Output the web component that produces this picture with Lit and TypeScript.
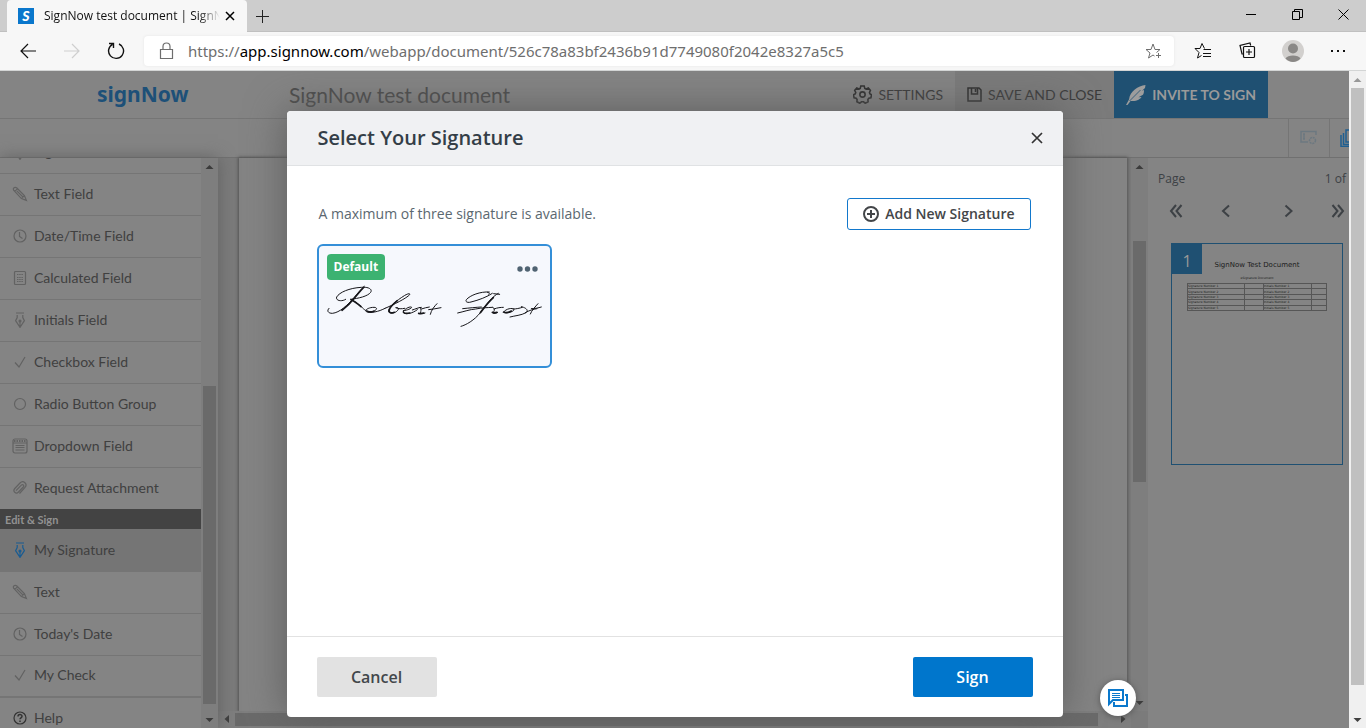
import { LitElement, html, css, svg, TemplateResult } from "lit";
import { customElement, property, state } from "lit/decorators.js";
import { classMap } from "lit/directives/class-map.js";

const icon = (body: TemplateResult, size = 16, box = 16) => html`<svg
  width=${size} height=${size} viewBox="0 0 ${box} ${box}" fill="none" stroke="currentColor"
  stroke-width="1.2" aria-hidden="true">${body}</svg>`;

const pen = svg`<path d="M4 1h8M5.2 3v2.6L3.6 8.6 8 15.4l4.4-6.8-1.6-3V3M8 9v5"/><circle cx="8" cy="9" r="1" fill="currentColor"/>`;
const pencil = svg`<path d="M1.6 4.2Q.8 2.8 2 1.8t2.6 0L12.4 9.6l2 4.8-5-1.8L1.6 4.2M2.8 5.4l2.800-2.800M12.4 9.6l-3 3M4.800 4.800l6.200 6.200M13 13l1.200 1.200"/>`;
const clock = svg`<circle cx="8" cy="8" r="6"/><path d="M7.5 4v4.5l3 2"/>`;
const calc = svg`<rect x="2.5" y="1.5" width="11" height="13" rx="1"/><path d="M5 4.500h6M5 7.500h6M5 9.500h6M5 11.500h6" stroke-dasharray="1.500 .7"/>`;
const check = svg`<path d="M3 8.500l4 4.500 6-10"/>`;
const circle = svg`<circle cx="8" cy="8" r="5.500"/>`;
const list = svg`<rect x="1" y="1" width="14" height="14" rx="2"/><path d="M1 5h14M3.500 7.500h9M3.500 9.500h9M3.500 12h9"/><path d="M2 3h12" stroke-dasharray="1.500 1" stroke-width="2"/>`;
const clip = svg`<path d="M4 10.600l5.300-5.500c1.500-1.300 3.300.4 2 1.900L6.500 12c-2.500 2.600-6.200-.6-3.700-3.500L8 3c3.300-3.400 8.200 1 4.800 4.700L7.500 13.500"/>`;
const help = svg`<circle cx="8" cy="8" r="6"/><path d="M6 6.500C6 4 10 4 10 6.300 10 8 8 7.700 8 9.300M8 10.500V12" stroke-width="1.500"/>`;

interface Item { label: string; glyph: TemplateResult; }

const FIELDS: Item[] = [
  { label: "Signature Field", glyph: pen },
  { label: "Text Field", glyph: pencil },
  { label: "Date/Time Field", glyph: clock },
  { label: "Calculated Field", glyph: calc },
  { label: "Initials Field", glyph: pen },
  { label: "Checkbox Field", glyph: check },
  { label: "Radio Button Group", glyph: circle },
  { label: "Dropdown Field", glyph: list },
  { label: "Request Attachment", glyph: clip },
];
const TOOLS: Item[] = [
  { label: "My Signature", glyph: pen },
  { label: "Text", glyph: pencil },
  { label: "Today's Date", glyph: clock },
  { label: "My Check", glyph: check },
];

@customElement("scroll-rail")
class ScrollRail extends LitElement {
  @property({ type: Number }) before = 0;
  @property({ type: Number }) size = 1;
  @property({ type: Number }) after = 0;
  @property({ type: Boolean, reflect: true }) horizontal = false;

  static styles = css`
    :host { display: flex; flex-direction: column; width: 17px; flex: none; background: var(--track, #7e7e7e); color: var(--arrow, #3b3b3b); }
    :host([horizontal]) { flex-direction: row; width: auto; height: 17px; }
    .end { width: 17px; height: 17px; flex: none; }
    .track { flex: 1; min-height: 0; min-width: 0; display: flex; flex-direction: column; padding: 0 2px; }
    :host([horizontal]) .track { flex-direction: row; padding: 2px 0; }
    .thumb { background: var(--thumb, #6a6a6a); }
    svg { display: block; }
    .first { color: var(--first, inherit); }
  `;

  render() {
    const h = this.horizontal;
    return html`
      <div class="end first"><svg width="17" height="17"><path fill="currentColor" d=${h ? "M11 4v8L6.500 8z" : "M4.500 11h8L8.500 7z"} /></svg></div>
      <div class="track">
        <div style="flex:${this.before} 0 0"></div>
        <div class="thumb" style="flex:${this.size} 0 0"></div>
        <div style="flex:${this.after} 0 0"></div>
      </div>
      <div class="end"><svg width="17" height="17"><path fill="currentColor" d=${h ? "M7 4v8l4.500-4z" : "M4.500 7h8l-4 4z"} /></svg></div>
    `;
  }
}

@customElement("browser-chrome")
class BrowserChrome extends LitElement {
  static styles = css`
    :host { display: block; font-family: "Noto Sans", "Open Sans", sans-serif; color: #111; }
    button { border: 0; background: none; padding: 0; color: inherit; font: inherit; display: grid; place-items: center; }
    .tabs { height: 32px; box-sizing: border-box; background: #cdcdcd; border-bottom: 1px solid #c0c0c0; display: flex; padding-left: 7px; }
    .tab { width: 240px; height: 32px; box-sizing: border-box; background: #f7f7f7; border-radius: 4px 4px 0 0; display: flex; align-items: center; padding: 0 11px; font: 12px/16px "Open Sans", sans-serif; }
    .fav { width: 16px; height: 16px; background: #0a77cc; color: #fff; display: grid; place-items: center; font: italic 900 14px/16px Lato, sans-serif; margin-right: 10px; }
    .name { flex: 1; white-space: nowrap; overflow: hidden; mask-image: linear-gradient(to right, #000 88%, transparent); }
    .close { margin-left: 4px; }
    .new { width: 30px; height: 32px; }
    .win { margin-left: auto; display: flex; }
    .win button { width: 46px; height: 28px; }
    .bar { height: 39px; box-sizing: border-box; background: #f7f7f7; border-bottom: 1px solid #d3d5d5; display: flex; align-items: center; padding: 0 6px; }
    .nav { width: 44px; height: 32px; }
    .field ~ .nav { width: 45px; }
    .faded { color: #cfcfcf; }
    .field { flex: 1; margin: 0 6px; height: 30px; background: #fff; border-radius: 4px; box-shadow: 0 0 3px #e4e4e4; display: flex; align-items: center; padding: 0 11px 0 13px; color: #6e6e6e; }
    .url { flex: 1; margin-left: 13px; font-size: 15px; white-space: nowrap; overflow: hidden; }
    .url b { font-weight: 400; color: #000; }
    svg { display: block; }
  `;

  render() {
    return html`
      <div class="tabs">
        <div class="tab">
          <span class="fav">S</span>
          <span class="name">SignNow test document | SignNow</span>
          <button class="close" aria-label="Close tab"><svg width="12" height="12" stroke="#000" stroke-width="1.500"><path d="M2 2l8 8M10 2l-8 8" /></svg></button>
        </div>
        <button class="new" aria-label="New tab"><svg width="14" height="14" stroke="#222"><path d="M7.500 1v13M1 7.500h13" /></svg></button>
        <div class="win">
          <button aria-label="Minimize"><svg width="10" height="10" stroke="#000"><path d="M0 5.500h10" /></svg></button>
          <button aria-label="Restore"><svg width="11" height="11" stroke="#000" fill="none"><path d="M.5 2.500h7v8h-7zM2.500 2.500v-2h8v8h-3" /></svg></button>
          <button aria-label="Close window"><svg width="11" height="11" stroke="#000"><path d="M.5.500l10 10M10.500.500l-10 10" /></svg></button>
        </div>
      </div>
      <div class="bar">
        <button class="nav" aria-label="Back"><svg width="18" height="16" stroke="#111" fill="none" stroke-width="1.200"><path d="M17 8H2M9 1L2 8l7 7" /></svg></button>
        <button class="nav faded" aria-label="Forward"><svg width="18" height="16" stroke="currentColor" fill="none" stroke-width="1.200"><path d="M1 8h15M9 1l7 7-7 7" /></svg></button>
        <button class="nav" aria-label="Reload"><svg width="18" height="18" stroke="#111" fill="none" stroke-width="1.400"><path d="M12 2a7.500 7.500 0 1 1-6.500.3M2 1.500h4.500V6" /></svg></button>
        <div class="field">
          <svg width="18" height="18" stroke="currentColor" fill="none" stroke-width="1.200"><path d="M3.500 7.500h12v9h-12zM6 7.500V4.500a3.500 3.500 0 0 1 7 0v3" /></svg>
          <span class="url">https://<b>app.signnow.com</b>/webapp/document/526c78a83bf2436b91d7749080f2042e8327a5c5</span>
          <svg width="18" height="18" stroke="currentColor" fill="none"><path d="M11.500 10.500l3.500-3h-5L8 2 6 7.500H1l4 3.500-1.500 5L8 13l1.500 1M13.500 11v5M11 13.500h5" /></svg>
        </div>
        <button class="nav" aria-label="Favorites"><svg width="18" height="18" stroke="#111" fill="none"><path d="M10.500 6.500L8 1.500 6 6.500H1l4 4-1.500 5.500 4-2.500M9.500 7.500H17M9 11.500h8M9 14.500h8" /></svg></button>
        <button class="nav" aria-label="Collections"><svg width="18" height="18" stroke="#111" fill="none" stroke-width="1.200"><path d="M4 12L3 12 1 3.500l10-2.500.7 2.500" /><rect x="4.500" y="4.500" width="11" height="11" rx="1" /><path d="M10 7v6M7 10h6" /></svg></button>
        <button class="nav" aria-label="Profile"><svg width="22" height="22"><circle cx="11" cy="11" r="11" fill="#d2d0ce" /><circle cx="11" cy="8.500" r="5" fill="#8a8886" /><path d="M3.500 18.500c2-4 13-4 15 0-4 4.500-11 4.500-15 0z" fill="#8a8886" /></svg></button>
        <button class="nav" aria-label="More"><svg width="16" height="4" fill="#111"><path d="M1 1h2v2H1zM7 1h2v2H7zM13 1h2v2h-2z" /></svg></button>
      </div>
    `;
  }
}

@customElement("tool-sidebar")
class ToolSidebar extends LitElement {
  @state() private active = "My Signature";

  static styles = css`
    :host { display: flex; width: 218px; flex: none; overflow: hidden; font: 14px/20px Lato, sans-serif; color: #404040; box-shadow: 0 0 16px #606060; z-index: 1; background: #848484; }
    .list { flex: 1; overflow: hidden; min-height: 0; }
    ul { list-style: none; margin: 0; padding: 0; }
    .fields { margin-top: -26px; }
    button { width: 100%; height: 42px; box-sizing: border-box; display: flex; align-items: center; gap: 6px; border: 0; border-bottom: 1px solid #757575; background: none; padding: 0 12px 2px; font: inherit; color: inherit; }
    svg { color: #626262; flex: none; }
    .fields li:last-child button { border-bottom: 0; height: 41px; }
    .tools { border-top: 1px solid #757575; }
    .tools li:last-child button { border-bottom-width: 2px; }
    h2 { margin: 0; height: 20px; padding: 0 5px; background: #434343; color: #929292; font: 700 11px/22px Lato, sans-serif; }
    .active { background: #757575; }
    .active svg { color: #1a5c92; }
    .help svg { color: #333; }
  `;

  private row(item: Item) {
    return html`<li><button class=${classMap({ active: item.label === this.active })}
      @click=${() => (this.active = item.label)}>${icon(item.glyph)}${item.label}</button></li>`;
  }

  render() {
    return html`
      <nav class="list" aria-label="Tools">
        <ul class="fields">${FIELDS.map((f) => this.row(f))}</ul>
        <h2>Edit &amp; Sign</h2>
        <ul class="tools">${TOOLS.map((f) => this.row(f))}</ul>
        <button class="help">${icon(help)}Help</button>
      </nav>
      <scroll-rail .before=${211} .size=${318} .after=${7}></scroll-rail>
    `;
  }
}

@customElement("page-panel")
class PagePanel extends LitElement {
  static styles = css`
    :host { display: block; width: 201px; flex: none; box-sizing: border-box; overflow: hidden; background: #848484; color: #3d4145; font: 12px/20px "Open Sans", sans-serif; }
    .top { display: flex; justify-content: space-between; white-space: nowrap; padding: 11px 3px 0 10px; }
    .steps { display: flex; justify-content: space-between; padding: 13px 4px 0 21px; }
    .steps button { border: 0; background: none; padding: 0; height: 18px; color: inherit; }
    .steps button:nth-child(2) { margin-right: 12px; }
    svg { display: block; }
    .thumb { margin: 23px 6px 0 23px; height: 222px; box-sizing: border-box; border: 1px solid #1f5072; position: relative; padding: 15px 15px 0 15px; font-family: "DejaVu Sans", sans-serif; color: #1c1c1c; }
    .num { position: absolute; left: 0; top: 0; width: 30px; height: 30px; background: #1f5072; color: #999; font: 16px/34px "Open Sans", sans-serif; text-align: center; }
    h3 { margin: 0; font-size: 7px; line-height: 12px; text-align: center; font-weight: 400; white-space: nowrap; }
    p { margin: 4px 0 0; font-size: 3px; line-height: 6px; text-align: center; }
    table { margin-top: 2px; width: 100%; height: 28px; border-collapse: collapse; table-layout: fixed; font-size: 3px; line-height: 4px; }
    td { border: 1px solid #565656; padding: 0; overflow: hidden; white-space: nowrap; }
    .wide { width: 40%; } .slim { width: 13%; } .mid { width: 34%; }
  `;

  private step(label: string, d: string) {
    return html`<button aria-label=${label}><svg width="14" height="18" fill="none" stroke="currentColor" stroke-width="2"><path d=${d} /></svg></button>`;
  }

  render() {
    return html`
      <div class="top"><span>Page</span><span>1 of</span></div>
      <div class="steps">
        ${this.step("First page", "M7 3L2 9l5 6M12.500 3l-5 6 5 6")}
        ${this.step("Previous page", "M10 3.500L4 9l6 5.500")}
        ${this.step("Next page", "M4.500 3.500L10.500 9l-6 5.500")}
        ${this.step("Last page", "M7 3l5 6-5 6M1.500 3l5 6-5 6")}
      </div>
      <div class="thumb">
        <span class="num">1</span>
        <h3>SignNow Test Document</h3>
        <p>eSignature Document</p>
        <table><tbody>
          ${[1, 2, 3, 4, 5].map((n) => html`<tr><td class="wide">Signature Number ${n}</td><td class="slim"></td><td class="mid">Initials Number ${n}</td><td></td></tr>`)}
        </tbody></table>
      </div>
    `;
  }
}

@customElement("signature-dialog")
class SignatureDialog extends LitElement {
  static styles = css`
    :host { display: flex; flex-direction: column; width: 776px; max-width: 94%; background: #fff; border-radius: 4px; overflow: hidden; box-shadow: 0 0 40px #5c5c5c; font-family: "Open Sans", sans-serif; }
    header { height: 54px; flex: none; display: flex; align-items: center; justify-content: space-between; padding: 0 18px 0 31px; background: #f0f1f3; border-bottom: 1px solid #e0e2e4; }
    h1 { margin: 0; font-size: 20px; line-height: 28px; font-weight: 600; color: #343e47; }
    button { font: 600 16px/20px "Open Sans", sans-serif; }
    svg { display: block; }
    .x { border: 0; background: none; padding: 0; color: #333; }
    main { flex: 1; min-height: 0; padding: 32px 32px 0 30px; }
    .row { display: flex; align-items: center; justify-content: space-between; }
    p { margin: 0 0 0 2px; font-size: 14px; line-height: 20px; color: #5b6870; }
    .add { height: 32px; padding: 0 15px; display: flex; align-items: center; gap: 6px; border: 1px solid #1278cc; border-radius: 3px; background: #fff; color: #434649; font-size: 14px; }
    .card { margin-top: 14px; width: 235px; height: 124px; box-sizing: border-box; border: 2px solid #348fd8; border-radius: 6px; background: #f6f8fd; padding: 8px; }
    .card .row { height: 26px; }
    .badge { background: #3cb271; color: #fff; border-radius: 4px; height: 26px; padding: 0 7px; font-size: 12px; line-height: 26px; font-weight: 700; }
    .dots { border: 0; background: none; padding: 4px 4px 0 0; color: #506372; }
    .sig { margin-top: 5px; }
    footer { flex: none; border-top: 1px solid #e2e2e2; padding: 20px 30px; display: flex; justify-content: space-between; }
    footer button { width: 120px; height: 40px; border: 0; border-radius: 2px; background: #e2e2e2; color: #42474b; }
    footer .sign { background: #0076cc; color: #fff; }
  `;

  render() {
    return html`
      <header>
        <h1>Select Your Signature</h1>
        <button class="x" aria-label="Close"><svg width="16" height="16" stroke="currentColor" stroke-width="1.700"><path d="M3 3l10 10M13 3L3 13" /></svg></button>
      </header>
      <main>
        <div class="row">
          <p>A maximum of three signature is available.</p>
          <button class="add">
            <svg width="16" height="16" fill="none" stroke="currentColor" stroke-width="2"><circle cx="8" cy="8" r="7" /><path d="M8 4v8M4 8h8" /></svg>
            Add New Signature
          </button>
        </div>
        <div class="card">
          <div class="row">
            <span class="badge">Default</span>
            <button class="dots" aria-label="More options"><svg width="21" height="6" fill="currentColor"><circle cx="3" cy="3" r="2.700" /><circle cx="10.500" cy="3" r="2.700" /><circle cx="18" cy="3" r="2.700" /></svg></button>
          </div>
          <svg class="sig" width="215" height="44" viewBox="141 645 645 132" role="img" aria-label="Signature of Robert Frost" fill="none" stroke="#16161a" stroke-linecap="round" stroke-linejoin="round" stroke-width="3">
            <path d="M147 715c-8 8-2 15 10 15 22-2 46-25 65-47 12-14 22-26 31-34" />
            <path d="M186 721c14-11 27-24 38-38 9-11 18-22 27-31" stroke-width="5" />
            <path d="M197 688c-12 8-31 4-27-7 8-14 38-27 74-29 22-2 34 6 28 15-9 12-36 18-60 21" />
            <path d="M212 688c12 5 22 14 32 22 8 9 18 17 30 15 18-3 20-13 8-13-16 0-29 8-23 13 10 6 38 0 56-10" />
            <path d="M214 690c12 5 20 12 29 20M262 724c8 3 14 2 20 0" stroke-width="5" />
            <path d="M315 715c24-10 66-31 74-41 3-5-7-3-16 3-24 15-48 35-47 46 0 9 14 8 23 2 9-7 9-14-2-12 8 4 18 4 27 2" />
            <path d="M352 692c-15 12-24 22-25 31 1 6 8 7 16 4" stroke-width="5" />
            <path d="M370 722c12-1 25-7 25-10-3-4-19 3-24 11-3 8 7 9 18 7 9-2 16-6 23-11" />
            <path d="M370 726c2 5 10 5 19 3M416 730c5 1 10 1 15-1" stroke-width="5" />
            <path d="M397 720c10-3 19-8 27-8M418 712c7 4 5 11 3 17 4 2 9 2 14 0M424 717c9-3 17-5 24-6" />
            <path d="M471 701c-8 8-17 19-20 32M446 719c12-1 25-4 37-6" />
            <path d="M628 666c-27-2-58 10-69 23-4 7 4 10 14 7 24-6 48-15 64-26M622 667c6 0 8 3 4 6" />
            <path d="M655 670c-18 9-38 35-54 58-18 23-43 37-58 41M641 671l18 2" />
            <path d="M640 683c-14 12-28 31-39 45" stroke-width="5" />
            <path d="M533 729c18-4 38-11 54-12 20-4 35-4 50-5M548 716c18-2 40-4 56-5" />
            <path d="M638 712c8 3 6 11 0 17 6 2 10 1 14-1M642 717c10-4 20-5 28-5" />
            <path d="M670 727c8-12 28-14 32-9 2 6-19 13-29 10M699 717c10 0 19-2 28-5" />
            <path d="M637 727c5 3 9 2 14 0M671 726c6 3 16 1 23-3" stroke-width="5" />
            <path d="M724 710c14 3 23 11 14 18-14 8-33 9-48 13M736 728c12-7 23-10 35-12" />
            <path d="M774 701c-8 9-19 20-23 31M754 716c11 0 20-2 30-5" />
          </svg>
        </div>
      </main>
      <footer><button>Cancel</button><button class="sign">Sign</button></footer>
    `;
  }
}

@customElement("app-root")
class AppRoot extends LitElement {
  static styles = css`
    :host { display: flex; flex-direction: column; height: 100vh; overflow: hidden; font-family: Lato, sans-serif; }
    .view { flex: 1; min-height: 0; display: flex; }
    .outer { --track: #f0f0f0; --thumb: #c0c0c0; --arrow: #404040; --first: #989898; }
    .site { flex: 1; min-width: 0; position: relative; display: flex; flex-direction: column; background: #848484; overflow: hidden; }
    button { border: 0; background: none; padding: 0; font: 14px/20px Lato, sans-serif; color: #3a3a3a; }
    svg { display: block; flex: none; }
    .head { height: 47px; flex: none; display: flex; align-items: stretch; border-bottom: 1px solid #757575; }
    .logo { width: 287px; box-sizing: border-box; padding-left: 97px; font: 700 21px/46px "Noto Sans", sans-serif; color: #1d5078; }
    .title { flex: 1; padding-left: 2px; font-size: 21px; line-height: 48px; color: #4c4c4c; white-space: nowrap; overflow: hidden; }
    .head button { display: flex; align-items: center; gap: 6px; padding: 0 12px; white-space: nowrap; }
    .head .save { background: #7b7b7b; }
    .head .invite { background: #1f5072; color: #9a9a9a; margin-right: 81px; font-weight: 700; }
    .sub { height: 38px; flex: none; display: flex; justify-content: flex-end; border-bottom: 1px solid #707070; }
    .sub button { width: 40px; box-sizing: content-box; border-left: 1px solid #757575; display: flex; align-items: center; justify-content: center; flex: none; }
    .sub .pages { width: 9px; overflow: hidden; justify-content: flex-start; padding-left: 10px; color: #1f5f91; }
    .work { flex: 1; min-height: 0; display: flex; }
    .canvas { flex: 1; min-width: 0; display: flex; flex-direction: column; }
    .desk { flex: 1; min-height: 0; display: flex; background: #7b7b7b; }
    .paper { flex: 1; margin: 0 4px 0 21px; background: #848484; box-shadow: 0 0 3px 1px #555; }
    .foot { display: flex; }
    .foot scroll-rail { flex: 1; }
    .corner { width: 17px; background: #7b7b7b; }
    .veil { position: absolute; inset: 0; display: flex; justify-content: center; padding: 40px 0 11px; z-index: 2; }
    .chat { position: absolute; z-index: 3; right: 213px; bottom: 12px; width: 36px; height: 36px; border-radius: 50%; background: #fff; display: grid; place-items: center; box-shadow: 0 1px 6px #555; }
  `;

  render() {
    return html`
      <browser-chrome></browser-chrome>
      <div class="view">
        <div class="site">
          <header class="head">
            <div class="logo">signNow</div>
            <div class="title">SignNow test document</div>
            <button>
              <svg width="19" height="19" viewBox="0 0 18 18" fill="none" stroke="#2f2f2f" stroke-width="1.500"><path d="M7.400 1h3.200l.6 2.200 1.200.6 2.100-1 2 2.300-.9 2 .5 1.300 1.400.8-.5 3-2 .4-.9 1.200.2 2.100-2.700 1.400-1.600-1.400H8l-1.600 1.400-2.700-1.400.2-2.100-.9-1.200-2-.4-.5-3 1.600-.8.5-1.300-1-2 2-2.300 2.100 1 1.100-.6z" /><circle cx="9" cy="9" r="2.500" /></svg>
              SETTINGS
            </button>
            <button class="save">
              <svg width="15" height="15" fill="none" stroke="#2f2f2f" stroke-width="1.500"><path d="M1 1h11l2 2v11H1zM4.500 1v6h6V1M8.500 2v3" /></svg>
              SAVE AND CLOSE
            </button>
            <button class="invite">
              <svg width="20" height="20" fill="#9d9d9d"><path d="M19.500 0C12 1 4 6 3 14.500L0 20h1.500l3-4c7 .5 9.500-2 11-4l-3 .2 4.500-2.400c1-2 1-3.500 1-4.800l-2 .8L19 3z" /><path d="M3.500 16L14.500 5" stroke="#1f5072" stroke-width=".8" /></svg>
              INVITE TO SIGN
            </button>
          </header>
          <div class="sub">
            <button aria-label="Field settings"><svg width="18" height="16" fill="none" stroke="#6c7880" stroke-width="1.500"><path d="M8 12H1V1.500h15V5M4 4v5M3 4h2M3 9h2" /><circle cx="12.500" cy="10.500" r="3" stroke-dasharray="2 .8" /></svg></button>
            <button class="pages" aria-label="Pages"><svg width="18" height="18" fill="none" stroke="currentColor" stroke-width="1.500"><path d="M6 1h9v12H6zM3.500 4v11.500H13M1 6v11.500h10" /></svg></button>
          </div>
          <div class="work">
            <tool-sidebar></tool-sidebar>
            <div class="canvas">
              <div class="desk">
                <div class="paper"></div>
                <scroll-rail .before=${66} .size=${241} .after=${212}></scroll-rail>
              </div>
              <div class="foot">
                <scroll-rail horizontal .before=${0} .size=${863} .after=${16}></scroll-rail>
                <div class="corner"></div>
              </div>
            </div>
            <page-panel></page-panel>
          </div>
          <div class="veil"><signature-dialog role="dialog" aria-label="Select Your Signature"></signature-dialog></div>
          <button class="chat" aria-label="Chat">
            <svg width="20" height="18" fill="none" stroke="#0a78cc" stroke-width="2"><path d="M1 15V1h14v10H5zM17 6h2v11H6v-4" /><path d="M4 4.500h8M4 6.500h8M4 8.500h8" stroke-width="1" /></svg>
          </button>
        </div>
        <scroll-rail class="outer" .before=${0} .size=${597} .after=${26}></scroll-rail>
      </div>
    `;
  }
}
